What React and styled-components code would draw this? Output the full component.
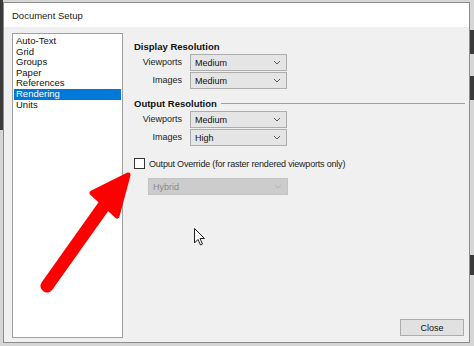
import styled, { createGlobalStyle } from "styled-components";

const Global = createGlobalStyle`
  html, body {
    margin: 0;
    padding: 0;
    background: #d9d9d9;
    font-family: "Liberation Sans", Arial, sans-serif;
  }
`

const Desk = styled.div`
  position: relative;
  width: 474px;
  height: 346px;
  overflow: hidden;
  background:
    linear-gradient(#3a3a3a, #3a3a3a) left top / 3px 130px no-repeat,
    linear-gradient(#3a3a3a, #3a3a3a) right 0 top 30px / 4px 24px no-repeat,
    linear-gradient(#3a3a3a, #3a3a3a) right 0 top 76px / 4px 24px no-repeat,
    linear-gradient(#3a3a3a, #3a3a3a) right 0 top 255px / 4px 20px no-repeat,
    #d6d6d6;
  padding: 2px 4px 3px 3px;
  box-sizing: border-box;
`

const Win = styled.div`
  display: flex;
  flex-direction: column;
  height: 100%;
  background: #f0f0f0;
  border: 1px solid #8c8c8c;
  box-sizing: border-box;
`

const TitleBar = styled.div`
  height: 24px;
  flex: none;
  display: flex;
  align-items: center;
  padding-left: 8px;
  background: #fff;
  font-size: 9.5px;
  color: #1a1a1a;
`

const Body = styled.div`
  flex: 1;
  display: flex;
  gap: 11px;
  padding: 6px 4px 4px 8px;
  min-height: 0;
`

const ListBox = styled.ul`
  width: 111px;
  flex: none;
  margin: 0;
  padding: 2px 1px;
  list-style: none;
  background: #fff;
  border: 1px solid #a0a0a0;
  box-sizing: border-box;
`

const ListItem = styled.li`
  height: 10.6px;
  line-height: 10.6px;
  padding-left: 2px;
  font-size: 9.5px;
  color: ${p => (p.$active ? "#fff" : "#111")};
  background: ${p => (p.$active ? "#0078d7" : "transparent")};
`

const Panel = styled.div`
  flex: 1;
  display: flex;
  flex-direction: column;
  padding-top: 7px;
`

const Heading = styled.div`
  display: flex;
  align-items: center;
  gap: 4px;
  height: 13px;
  margin-top: ${p => p.$top || 0}px;
  font-size: 9.5px;
  font-weight: bold;
  color: #111;
  &::after {
    content: "";
    flex: 1;
    height: 1px;
    background: ${p => (p.$line ? "#a0a0a0" : "transparent")};
  }
`

const Rows = styled.div`
  display: grid;
  grid-template-columns: 56px 97px;
  row-gap: 1px;
  margin-top: 1px;
`

const Label = styled.div`
  text-align: right;
  padding-right: 8px;
  font-size: 9px;
  line-height: 17px;
  color: #222;
`

const Select = styled.div`
  display: flex;
  align-items: center;
  justify-content: space-between;
  width: ${p => p.$w || 97}px;
  height: 17px;
  padding: 0 5px 0 4px;
  box-sizing: border-box;
  background: ${p => (p.$disabled ? "#cccccc" : "#e5e5e5")};
  border: 1px solid ${p => (p.$disabled ? "#c4c4c4" : "#adadad")};
  font-size: 9px;
  color: ${p => (p.$disabled ? "#8a8a8a" : "#111")};
  svg { color: ${p => (p.$disabled ? "#b5b5b5" : "#555")}; }
`

const CheckRow = styled.label`
  display: flex;
  align-items: center;
  gap: 4px;
  margin-top: 12px;
  font-size: 9px;
  letter-spacing: -0.2px;
  color: #222;
`

const Box = styled.span`
  width: 11px;
  height: 11px;
  box-sizing: border-box;
  border: 1px solid #333;
  background: #fff;
`

const Indent = styled.div`
  margin: 9px 0 0 14px;
`

const Footer = styled.div`
  margin-top: auto;
  display: flex;
  justify-content: flex-end;
  padding: 0 1px 2px 0;
`

const Button = styled.button`
  width: 64px;
  height: 17px;
  padding: 0;
  background: #e1e1e1;
  border: 1px solid #adadad;
  font-family: inherit;
  font-size: 9px;
  color: #111;
`

const Overlay = styled.svg`
  position: absolute;
  left: 0;
  top: 0;
  pointer-events: none;
`

const Chevron = () => (
  <svg width="8" height="5" viewBox="0 0 8 5">
    <path d="M1 1l3 3 3-3" fill="none" stroke="currentColor" strokeWidth="1" />
  </svg>
)

const items = ["Auto-Text", "Grid", "Groups", "Paper", "References", "Rendering", "Units"]

function SelectRow({ label, value }) {
  return (
    <>
      <Label>{label}</Label>
      <Select>{value}<Chevron /></Select>
    </>
  )
}

export default function App() {
  return (
    <Desk>
      <Global />
      <Win>
        <TitleBar>Document Setup</TitleBar>
        <Body>
          <ListBox>
            {items.map(t => (
              <ListItem key={t} $active={t === "Rendering"}>{t}</ListItem>
            ))}
          </ListBox>
          <Panel>
            <Heading>Display Resolution</Heading>
            <Rows>
              <SelectRow label="Viewports" value="Medium" />
              <SelectRow label="Images" value="Medium" />
            </Rows>
            <Heading $line $top={8}>Output Resolution</Heading>
            <Rows>
              <SelectRow label="Viewports" value="Medium" />
              <SelectRow label="Images" value="High" />
            </Rows>
            <CheckRow><Box />Output Override (for raster rendered viewports only)</CheckRow>
            <Indent>
              <Select $disabled $w={140}>Hybrid<Chevron /></Select>
            </Indent>
            <Footer><Button>Close</Button></Footer>
          </Panel>
        </Body>
      </Win>
      <Overlay width="474" height="346" viewBox="0 0 474 346">
        <line x1="47" y1="286" x2="106" y2="203" stroke="#f00" strokeWidth="13" strokeLinecap="round" />
        <path d="M128 175 L92 193 L117 216 Z" fill="#f00" stroke="#f00" strokeWidth="5" strokeLinejoin="round" />
        <path d="M194.5 228.5 L194.5 243 L198 239.5 L200.5 245 L202.5 244 L200 238.5 L204.5 238.5 Z"
          fill="#fff" stroke="#222" strokeWidth="1" strokeLinejoin="round" />
      </Overlay>
    </Desk>
  )
}
